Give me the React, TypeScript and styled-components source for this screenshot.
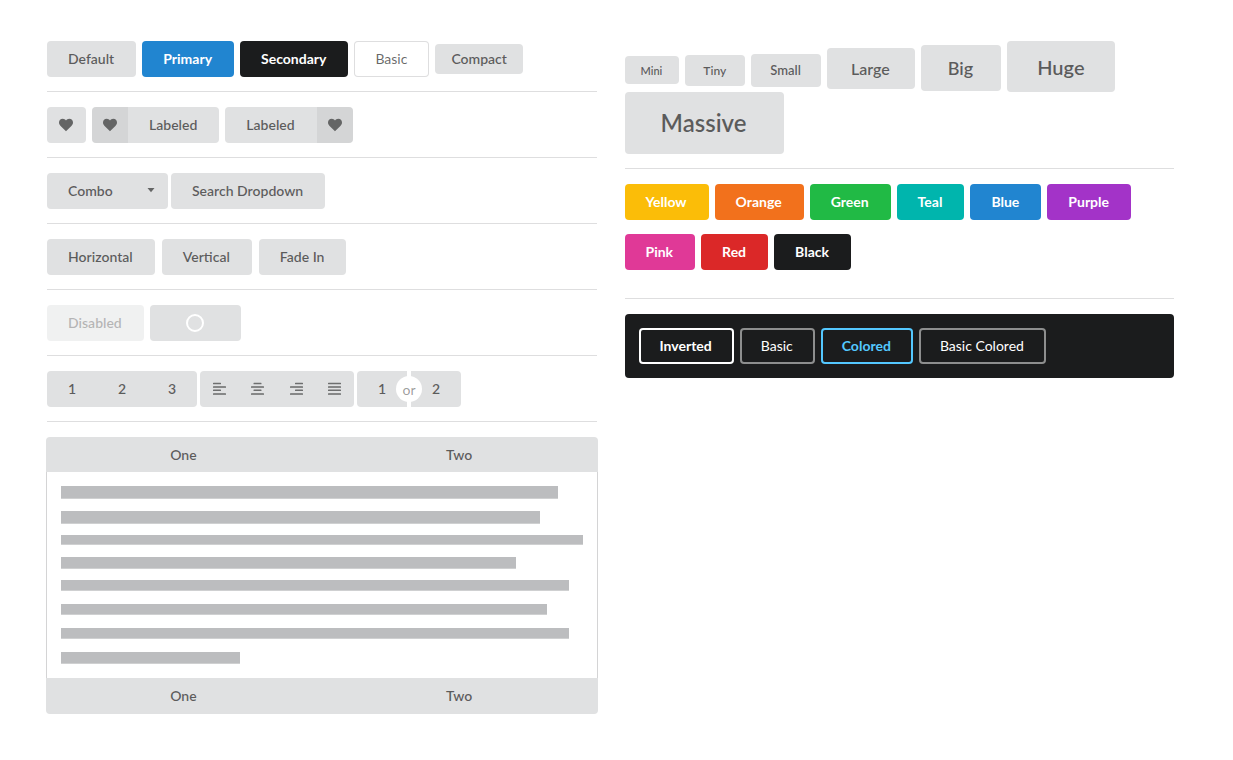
import React from "react";
import styled, { createGlobalStyle, css } from "styled-components";

const GlobalStyle = createGlobalStyle`
  *, *::before, *::after { box-sizing: border-box; }
  body {
    margin: 0;
    background: #fff;
    color: rgba(0, 0, 0, 0.87);
    font-family: Lato, "Liberation Sans", sans-serif;
    font-size: 14px;
    line-height: 20px;
  }
`;

const Page = styled.main`
  display: grid;
  grid-template-columns: minmax(0, 1fr) minmax(0, 1fr);
  align-items: start;
  gap: 28px;
  padding: 41px 59px 46px 47px;
`;

const Column = styled.section`
  display: flex;
  flex-direction: column;
`;

const Divider = styled.hr`
  width: 100%;
  height: 1px;
  margin: 14px 0 15px;
  border: 0;
  background: #dededf;
`;

const Row = styled.div<{ $gap?: number; $align?: string }>`
  display: flex;
  flex-wrap: wrap;
  align-items: ${(p) => p.$align ?? "center"};
  column-gap: ${(p) => p.$gap ?? 6}px;
`;

const ColorRow = styled(Row)`
  row-gap: 14px;
  padding-bottom: 14px;
`;

const buttonBase = css`
  margin: 0;
  border: 0;
  border-radius: 4px;
  font-family: inherit;
  font-size: 14px;
  line-height: 14px;
  font-weight: 600;
  white-space: nowrap;
  cursor: pointer;
`;

const Button = styled.button<{ $bg?: string; $fg?: string }>`
  ${buttonBase}
  padding: 11px 22px 11px 21px;
  background: ${(p) => p.$bg ?? "#e0e1e2"};
  color: ${(p) => p.$fg ?? "rgba(0, 0, 0, 0.6)"};
  font-weight: ${(p) => (p.$fg ? 700 : 600)};
  &:disabled {
    opacity: 0.45;
    cursor: default;
  }
`;

const BasicButton = styled(Button)`
  background: #fff;
  font-weight: 400;
  box-shadow: inset 0 0 0 1px #dededf;
`;

const CompactButton = styled(Button)`
  padding: 8px 16px;
`;

const SizedButton = styled(Button)<{ $size: number; $line: number; $pad: string }>`
  padding: ${(p) => p.$pad};
  font-size: ${(p) => p.$size}px;
  line-height: ${(p) => p.$line}px;
`;

const OutlineButton = styled(Button)<{ $line: string; $light?: boolean }>`
  background: transparent;
  box-shadow: inset 0 0 0 2px ${(p) => p.$line};
  font-weight: ${(p) => (p.$light ? 400 : 700)};
`;

const IconButton = styled(Button)`
  display: flex;
  justify-content: center;
  padding: 11px 13px 11px 12px;
`;

const LabeledButton = styled(Button)<{ $right?: boolean }>`
  display: flex;
  flex-direction: ${(p) => (p.$right ? "row-reverse" : "row")};
  padding: 0;
  overflow: hidden;
`;

const IconCell = styled.span`
  display: flex;
  padding: 11px;
  background: rgba(0, 0, 0, 0.05);
`;

const LabelText = styled.span`
  padding: 11px 22px 11px 21px;
`;

const Combo = styled.span`
  position: relative;
  display: flex;
`;

const ComboSelect = styled.select`
  ${buttonBase}
  appearance: none;
  width: 121px;
  height: 36px;
  padding: 0 21px;
  background: #e0e1e2;
  color: rgba(0, 0, 0, 0.6);
`;

const Caret = styled.svg`
  position: absolute;
  top: 15px;
  right: 13px;
  pointer-events: none;
`;

const LoadingButton = styled(Button)`
  display: flex;
  justify-content: center;
  width: 91px;
  padding: 9px 0;
`;

const Ring = styled.span`
  width: 18px;
  height: 18px;
  border: 2px solid #fff;
  border-radius: 50%;
`;

const Group = styled.div`
  display: flex;
  border-radius: 4px;
  overflow: hidden;
`;

const GroupButton = styled(Button)`
  width: 50px;
  padding: 11px 0;
  border-radius: 0;
`;

const IconGroup = styled.div`
  display: grid;
  grid-template-columns: repeat(4, 1fr);
  width: 154px;
  border-radius: 4px;
  background: #e0e1e2;
  overflow: hidden;
`;

const GroupIconButton = styled(IconButton)`
  padding: 11px 0;
  border-radius: 0;
  background: transparent;
`;

const OrGroup = styled.div`
  position: relative;
  display: flex;
  gap: 4px;
`;

const OrLeft = styled(GroupButton)`
  border-radius: 4px 0 0 4px;
`;

const OrRight = styled(GroupButton)`
  border-radius: 0 4px 4px 0;
`;

const Or = styled.span`
  position: absolute;
  top: 50%;
  left: 50%;
  width: 26px;
  height: 26px;
  margin: -13px 0 0 -13px;
  border-radius: 50%;
  background: #fff;
  color: rgba(0, 0, 0, 0.4);
  line-height: 28px;
  text-align: center;
`;

const Attached = styled.div`
  margin: 0 -1px;
`;

const AttachedBar = styled.div<{ $bottom?: boolean }>`
  display: grid;
  grid-template-columns: 1fr 1fr;
  border-radius: ${(p) => (p.$bottom ? "0 0 4px 4px" : "4px 4px 0 0")};
  overflow: hidden;
`;

const AttachedButton = styled(Button)<{ $bottom?: boolean }>`
  padding-bottom: ${(p) => (p.$bottom ? 11 : 10)}px;
  border-radius: 0;
`;

const Segment = styled.div`
  padding: 14px;
  border: solid #d4d4d5;
  border-width: 0 1px;
`;

const Bar = styled.div<{ $h: number; $gap: number }>`
  height: ${(p) => p.$h}px;
  margin-bottom: ${(p) => p.$gap}px;
  border: 1px solid #cfd0d1;
  border-width: 0 0 1px;
  background: #bcbdbf;
`;

const InvertedSegment = styled(Row)`
  padding: 14px;
  border-radius: 4px;
  background: #1b1c1d;
`;

const Heart = () => (
  <svg width="14" height="14" viewBox="0 0 14 14" fill="#646565" aria-hidden="true">
    <path d="M7 13.2 1.6 8C.5 6.900 0 5.800 0 4.600 0 2.200 1.500.8 3.800.8 5.100.8 6.300 1.600 7 2.500 7.700 1.600 8.900.8 10.200.8 12.500.8 14 2.200 14 4.600 14 5.800 13.500 6.900 12.400 8Z" />
  </svg>
);

type Align = "left" | "center" | "right" | "justify";

const lineSlots = [
  { y: 0.7, h: 1.5 },
  { y: 4, h: 2 },
  { y: 7.6, h: 1.5 },
  { y: 11, h: 2 },
];

const AlignIcon = ({ align }: { align: Align }) => {
  const short = align === "justify" ? 13 : 8;
  return (
    <svg width="13" height="14" viewBox="0 0 13 14" aria-hidden="true">
      {lineSlots.map((slot, i) => {
        const w = i % 2 === 0 ? short : 13;
        const x = align === "right" ? 13 - w : align === "center" ? (13 - w) / 2 : 0;
        return (
          <rect
            key={i}
            x={x}
            y={slot.y}
            width={w}
            height={slot.h}
            rx={0.5}
            fill={i % 2 === 0 ? "#6e6f6f" : "#868787"}
          />
        );
      })}
    </svg>
  );
};

const sizes = [
  { name: "Mini", size: 11, line: 10, pad: "10px 17px 8px 16px" },
  { name: "Tiny", size: 12, line: 13, pad: "9px 19px 9px 18px" },
  { name: "Small", size: 13, line: 13, pad: "10px 20px 10px 19px" },
  { name: "Large", size: 16, line: 17, pad: "12px 25px 12px 24px" },
  { name: "Big", size: 18, line: 18, pad: "14px 28px 14px 27px" },
  { name: "Huge", size: 20, line: 21, pad: "16px 30px 14px" },
  { name: "Massive", size: 24, line: 26, pad: "18px 37px 18px 36px" },
];

const colors: [string, string][] = [
  ["Yellow", "#fbbd08"],
  ["Orange", "#f2711c"],
  ["Green", "#21ba45"],
  ["Teal", "#00b5ad"],
  ["Blue", "#2185d0"],
  ["Purple", "#a333c8"],
  ["Pink", "#e03997"],
  ["Red", "#db2828"],
  ["Black", "#1b1c1d"],
];

const bars = [
  { w: 497, h: 13, gap: 12 },
  { w: 479, h: 13, gap: 11 },
  { w: 522, h: 10, gap: 12 },
  { w: 455, h: 12, gap: 11 },
  { w: 508, h: 11, gap: 13 },
  { w: 486, h: 11, gap: 13 },
  { w: 508, h: 11, gap: 13 },
  { w: 179, h: 12, gap: 0 },
];

const aligns: Align[] = ["left", "center", "right", "justify"];

export default function App() {
  return (
    <>
      <GlobalStyle />
      <Page>
        <Column>
          <Row>
            <Button>Default</Button>
            <Button $bg="#2185d0" $fg="#fff">Primary</Button>
            <Button $bg="#1b1c1d" $fg="#fff">Secondary</Button>
            <BasicButton>Basic</BasicButton>
            <CompactButton>Compact</CompactButton>
          </Row>
          <Divider />
          <Row>
            <IconButton aria-label="Like"><Heart /></IconButton>
            <LabeledButton>
              <IconCell><Heart /></IconCell>
              <LabelText>Labeled</LabelText>
            </LabeledButton>
            <LabeledButton $right>
              <IconCell><Heart /></IconCell>
              <LabelText>Labeled</LabelText>
            </LabeledButton>
          </Row>
          <Divider />
          <Row $gap={3}>
            <Combo>
              <ComboSelect aria-label="Combo">
                <option>Combo</option>
              </ComboSelect>
              <Caret width="8" height="5" viewBox="0 0 8 5" fill="#646565" aria-hidden="true">
                <path d="M0.500 0h7L4 4.200Z" />
              </Caret>
            </Combo>
            <Button aria-haspopup="listbox">Search Dropdown</Button>
          </Row>
          <Divider />
          <Row $gap={7}>
            <Button>Horizontal</Button>
            <Button>Vertical</Button>
            <Button>Fade In</Button>
          </Row>
          <Divider />
          <Row>
            <Button disabled>Disabled</Button>
            <LoadingButton aria-label="Loading"><Ring /></LoadingButton>
          </Row>
          <Divider />
          <Row $gap={3}>
            <Group>
              <GroupButton>1</GroupButton>
              <GroupButton>2</GroupButton>
              <GroupButton>3</GroupButton>
            </Group>
            <IconGroup>
              {aligns.map((a) => (
                <GroupIconButton key={a} aria-label={`Align ${a}`}><AlignIcon align={a} /></GroupIconButton>
              ))}
            </IconGroup>
            <OrGroup>
              <OrLeft>1</OrLeft>
              <OrRight>2</OrRight>
              <Or>or</Or>
            </OrGroup>
          </Row>
          <Divider />
          <Attached>
            <AttachedBar>
              <AttachedButton>One</AttachedButton>
              <AttachedButton>Two</AttachedButton>
            </AttachedBar>
            <Segment>
              {bars.map((b, i) => (
                <Bar key={i} $h={b.h} $gap={b.gap} style={{ width: `${(b.w / 522) * 100}%` }} />
              ))}
            </Segment>
            <AttachedBar $bottom>
              <AttachedButton $bottom>One</AttachedButton>
              <AttachedButton $bottom>Two</AttachedButton>
            </AttachedBar>
          </Attached>
        </Column>
        <Column>
          <Row $align="baseline">
            {sizes.map((s) => (
              <SizedButton key={s.name} $size={s.size} $line={s.line} $pad={s.pad}>{s.name}</SizedButton>
            ))}
          </Row>
          <Divider />
          <ColorRow>
            {colors.map(([name, bg]) => (
              <Button key={name} $bg={bg} $fg="#fff">{name}</Button>
            ))}
          </ColorRow>
          <Divider />
          <InvertedSegment>
            <OutlineButton $line="#fff" $fg="#fff">Inverted</OutlineButton>
            <OutlineButton $line="#8d8e8e" $fg="#fff" $light>Basic</OutlineButton>
            <OutlineButton $line="#54c8ff" $fg="#54c8ff">Colored</OutlineButton>
            <OutlineButton $line="#8d8e8e" $fg="#fff" $light>Basic Colored</OutlineButton>
          </InvertedSegment>
        </Column>
      </Page>
    </>
  );
}
